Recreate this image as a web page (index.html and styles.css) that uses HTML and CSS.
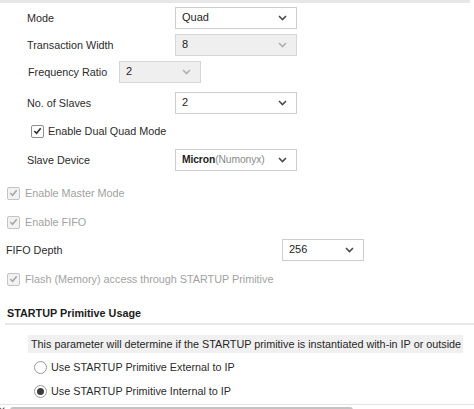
FILE: index.html
```html
<!DOCTYPE html>
<html>
<head>
<meta charset="utf-8">
<link rel="stylesheet" href="styles.css">
</head>
<body>
<div class="topbar"></div>

<div class="row field r1">
  <span class="label">Mode</span>
  <div class="sel"><span>Quad</span><svg class="chev" width="9" height="6" viewBox="0 0 9 6"><polyline points="1,1 4.5,4.5 8,1"/></svg></div>
</div>
<div class="row field r2">
  <span class="label">Transaction Width</span>
  <div class="sel dis"><span>8</span><svg class="chev light" width="9" height="6" viewBox="0 0 9 6"><polyline points="1,1 4.5,4.5 8,1"/></svg></div>
</div>
<div class="row field r3 freq">
  <span class="label">Frequency Ratio</span>
  <div class="sel dis small"><span>2</span><svg class="chev light" width="9" height="6" viewBox="0 0 9 6"><polyline points="1,1 4.5,4.5 8,1"/></svg></div>
</div>
<div class="row field r4">
  <span class="label">No. of Slaves</span>
  <div class="sel"><span>2</span><svg class="chev" width="9" height="6" viewBox="0 0 9 6"><polyline points="1,1 4.5,4.5 8,1"/></svg></div>
</div>
<div class="row check inner r5">
  <span class="cb"><svg width="12" height="12" viewBox="0 0 12 12"><polyline points="2.5,6 5,8.5 9.5,3"/></svg></span>
  <span>Enable Dual Quad Mode</span>
</div>
<div class="row field r6">
  <span class="label">Slave Device</span>
  <div class="sel"><span class="dev"><b>Micron</b><span class="muted">(Numonyx)</span></span><svg class="chev" width="9" height="6" viewBox="0 0 9 6"><polyline points="1,1 4.5,4.5 8,1"/></svg></div>
</div>
<div class="row check outer disabled r7">
  <span class="cb"><svg width="12" height="12" viewBox="0 0 12 12"><polyline points="2.5,6 5,8.5 9.5,3"/></svg></span>
  <span>Enable Master Mode</span>
</div>
<div class="row check outer disabled r8">
  <span class="cb"><svg width="12" height="12" viewBox="0 0 12 12"><polyline points="2.5,6 5,8.5 9.5,3"/></svg></span>
  <span>Enable FIFO</span>
</div>
<div class="row field depth r9">
  <span class="label">FIFO Depth</span>
  <div class="sel small"><span>256</span><svg class="chev" width="9" height="6" viewBox="0 0 9 6"><polyline points="1,1 4.5,4.5 8,1"/></svg></div>
</div>
<div class="row check outer disabled r10">
  <span class="cb"><svg width="12" height="12" viewBox="0 0 12 12"><polyline points="2.5,6 5,8.5 9.5,3"/></svg></span>
  <span>Flash (Memory) access through STARTUP Primitive</span>
</div>

<div class="heading">STARTUP Primitive Usage</div>
<div class="info">This parameter will determine if the STARTUP primitive is instantiated with-in IP or outside</div>
<div class="row radio r11">
  <span class="rb"></span>
  <span>Use STARTUP Primitive External to IP</span>
</div>
<div class="row radio r12">
  <span class="rb on"></span>
  <span>Use STARTUP Primitive Internal to IP</span>
</div>

<div class="hscroll">
  <span class="tick"></span>
  <div class="thumb"></div>
</div>
</body>
</html>
```

FILE: styles.css
```css
html, body {
  margin: 0;
  padding: 0;
}
body {
  width: 474px;
  height: 409px;
  overflow: hidden;
  background: #fff;
  color: #2b2b2b;
  font: 10.8px/1.2 "Liberation Sans", Arial, sans-serif;
}
.topbar {
  height: 3px;
  background: #e7e7e7;
  margin-right: 4px;
}
.row {
  display: flex;
  align-items: center;
}
.field {
  height: 22px;
  padding-left: 27px;
}
.label {
  width: 148px;
  flex: none;
}
.r1 { margin-top: 4px; }
.r2 { margin-top: 5px; }
.r3 { margin-top: 5px; }
.r4 { margin-top: 9px; }
.r5 { margin-top: 8px; }
.r6 { margin-top: 9px; }
.r7 { margin-top: 13px; }
.r8 { margin-top: 11px; }
.r9 { margin-top: 8px; }
.r10 { margin-top: 9px; }

.freq { padding-left: 28px; }
.freq .label { width: 91px; }
.depth { padding-left: 6px; }
.depth .label { width: 276px; }

.sel {
  box-sizing: border-box;
  width: 122px;
  height: 22px;
  border: 1px solid #cdcdcd;
  background: #fff;
  display: flex;
  align-items: center;
  justify-content: space-between;
  padding: 0 9px 0 6px;
  color: #1e1e1e;
  font-size: 11px;
}
.sel.small { width: 82px; }
.sel.dis { background: #efefef; border-color: #d6d6d6; }
.dev { font-size: 10.3px; letter-spacing: -0.1px; }
.sel b { font-weight: bold; color: #222; }
.muted { color: #8a8a8a; }
.chev polyline {
  fill: none;
  stroke: #4a4a4a;
  stroke-width: 1.6;
}
.chev.light polyline { stroke: #b0b0b0; }

.check { height: 18px; }
.check.inner { padding-left: 31px; }
.check.outer { padding-left: 7px; }
.cb {
  box-sizing: border-box;
  width: 13px;
  height: 13px;
  border: 1px solid #8e8e8e;
  border-radius: 2px;
  background: #fff;
  margin-right: 4px;
  display: flex;
  align-items: center;
  justify-content: center;
  flex: none;
}
.cb svg polyline {
  fill: none;
  stroke: #333;
  stroke-width: 1.8;
}
.disabled { color: #a2a2a2; }
.disabled .cb { border-color: #c4c4c4; background: #f2f2f2; }
.disabled .cb svg polyline { stroke: #a8a8a8; }
.check.outer .cb { margin-right: 5px; }

.heading {
  margin: 17px 0 0 5px;
  padding: 2px 0 3px 2px;
  font-weight: bold;
  color: #1c1c1c;
  border-bottom: 2px solid #e8e8e8;
}
.info {
  margin: 10px 11px 0 28px;
  height: 18px;
  line-height: 18px;
  padding-left: 3px;
  background: #f0f0f0;
  color: #262626;
  white-space: nowrap;
}
.radio {
  height: 18px;
  padding-left: 34px;
}
.r11 { margin-top: 6px; }
.r12 { margin-top: 6px; }
.rb {
  box-sizing: border-box;
  width: 13px;
  height: 13px;
  border: 1px solid #9a9a9a;
  border-radius: 50%;
  background: #fff;
  margin-right: 4px;
  flex: none;
  display: flex;
  align-items: center;
  justify-content: center;
}
.rb.on::after {
  content: "";
  width: 7px;
  height: 7px;
  border-radius: 50%;
  background: #3c3c3c;
}
.hscroll {
  position: relative;
  margin-top: 3px;
  border-top: 1px solid #e4e4e4;
  height: 9px;
}
.thumb {
  margin: 2px 0 0 10px;
  width: 343px;
  height: 8px;
  background: #c3c3c3;
  border-radius: 3px 3px 0 0;
}
.tick {
  position: absolute;
  left: 0;
  top: 1px;
  width: 3px;
  height: 3px;
  border-bottom: 1px solid #555;
  border-left: 1px solid #555;
  transform: rotate(-45deg);
}
```
